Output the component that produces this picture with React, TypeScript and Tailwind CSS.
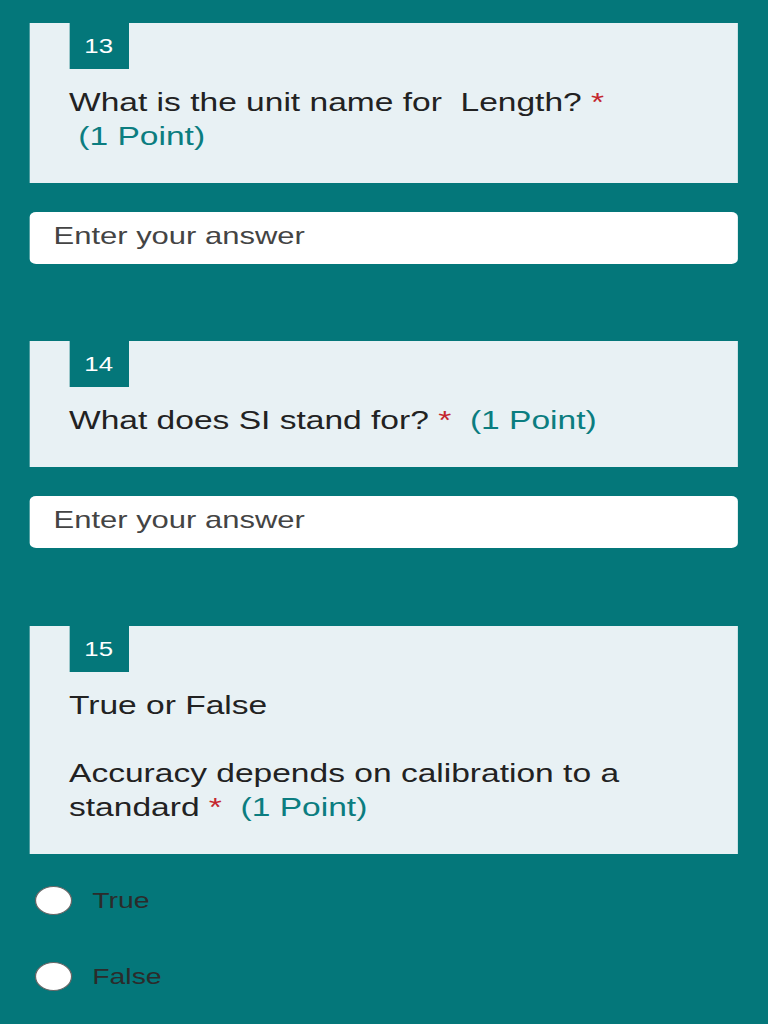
import React, { useState } from 'react';

// The screenshot is a phone-width form stretched horizontally, so the form is
// laid out at its native width and widened once on the wrapper.

interface QuestionProps {
  num: number;
  children: React.ReactNode;
}

const QuestionCard: React.FC<QuestionProps> = ({ num, children }) => (
  <div className="bg-[#e8f1f4] pl-[31px] pr-[31px] pb-[30px]">
    <div className="w-[46px] h-[46px] bg-[#04777a] text-white text-[20px] leading-[46px] text-center">
      {num}
    </div>
    <div className="mt-[16px] text-[26px] leading-[34px] text-[#222]">{children}</div>
  </div>
);

const Required: React.FC = () => <span className="text-[#c4262e]">*</span>;
const Points: React.FC = () => (
  <span className="text-[#0b7d80] whitespace-nowrap">{'\u00a0'}(1 Point)</span>
);

const AnswerBox: React.FC = () => {
  const [value, setValue] = useState('');
  return (
    <input
      type="text"
      value={value}
      onChange={(e) => setValue(e.target.value)}
      placeholder="Enter your answer"
      className="mt-[29px] w-full h-[52px] bg-white rounded-[5px] pl-[19px] pb-[5px] text-[24px] text-[#333] placeholder-[#444] outline-none"
    />
  );
};

export default function App() {
  const [choice, setChoice] = useState<string | null>(null);

  return (
    <div className="min-h-screen bg-[#04777a] overflow-hidden font-['Liberation_Sans',Arial,sans-serif]">
      <div className="w-[595px] origin-top-left scale-x-[1.29] pt-[23px] pl-[22.5px] pr-[23px] pb-[30px]">
        <QuestionCard num={13}>
          What is the unit name for {'\u00a0'}Length? <Required /> <Points />
        </QuestionCard>
        <AnswerBox />

        <div className="h-[77px]" />
        <QuestionCard num={14}>
          What does SI stand for? <Required /> <Points />
        </QuestionCard>
        <AnswerBox />

        <div className="h-[78px]" />
        <QuestionCard num={15}>
          <div>True or False</div>
          <div className="h-[34px]" />
          <div>
            Accuracy depends on calibration to a standard <Required /> <Points />
          </div>
        </QuestionCard>

        <div className="mt-[32px] flex flex-col gap-[47px] pl-[4px]">
          {['True', 'False'].map((opt) => (
            <label key={opt} className="flex items-center gap-[16px] cursor-pointer">
              <button
                type="button"
                onClick={() => setChoice(opt)}
                className="w-[29px] h-[29px] rounded-full bg-white border-[1.5px] border-[#666] flex items-center justify-center"
              >
                {choice === opt && <span className="w-[15px] h-[15px] rounded-full bg-[#04777a]" />}
              </button>
              <span className="text-[22px] leading-[29px] text-[#2b2b2b]">{opt}</span>
            </label>
          ))}
        </div>
      </div>
    </div>
  );
}
